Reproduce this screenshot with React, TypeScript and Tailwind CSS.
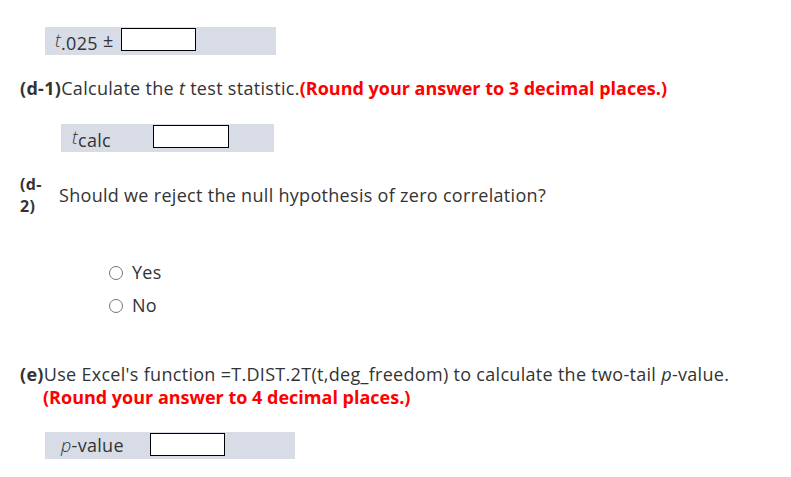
const font = { fontFamily: '"Open Sans", Arial, sans-serif' };

function AnswerBox({ className = '' }: { className?: string }) {
  return <input type="text" className={`h-[23px] w-[75px] border border-black bg-white ${className}`} />;
}

function Radio({ label }: { label: string }) {
  return (
    <label className="flex h-[33px] items-center gap-[9px]">
      <span className="h-[14px] w-[14px] rounded-full border border-[#767676] bg-white" />
      <span>{label}</span>
    </label>
  );
}

export default function App() {
  return (
    <div
      className="min-h-[477px] bg-white pl-[20px] text-[18px] leading-[23px] tracking-[0.3px] text-[#333]"
      style={font}
    >
      <div className="h-[27px]" />

      <div className="ml-[25px] flex h-[28px] w-[231px] items-start bg-[#d8dce6] pl-[10px] pt-px">
        <span className="mt-[1px] flex w-[48px]">
          <i className="font-light">t</i>
          <span className="relative top-[3px]">.025</span>
        </span>
        <span className="mt-[1px] w-[18px] text-[18px]">±</span>
        <AnswerBox />
      </div>

      <p className="mt-[22px] h-[23px] whitespace-nowrap">
        <b className="font-bold">(d-1)</b>Calculate the <i>t</i> test statistic.
        <b className="font-bold tracking-normal text-[#ff0000]">(Round your answer to 3 decimal places.)</b>
      </p>

      <div className="ml-[41px] mt-[24px] flex h-[28px] w-[213px] items-start bg-[#d8dce6] pl-[11px] pt-px">
        <span className="mt-[1px] flex w-[81px]">
          <i className="font-light">t</i>
          <span className="relative top-[3px]">calc</span>
        </span>
        <AnswerBox className="w-[76px]" />
      </div>

      <div className="mt-[21px] flex items-center">
        <div className="w-[39px] text-[16px] font-bold leading-[22px]">
          (d-
          <br />
          2)
        </div>
        <div>Should we reject the null hypothesis of zero correlation?</div>
      </div>

      <div className="ml-[89px] mt-[39px]">
        <Radio label="Yes" />
        <Radio label="No" />
      </div>

      <div className="mt-[41px]">
        <p className="whitespace-nowrap">
          <b className="font-bold">(e)</b>Use Excel's function =T.DIST.2T(t,deg_freedom) to calculate the two-tail{' '}
          <i>p</i>-value.
        </p>
        <p className="ml-[23px] font-bold tracking-normal text-[#ff0000]">(Round your answer to 4 decimal places.)</p>
      </div>

      <div className="ml-[25px] mt-[23px] flex h-[27px] w-[250px] items-start bg-[#d8dce6] pl-[16px] pt-px">
        <span className="mt-[1px] w-[89px]">
          <i className="font-light">p</i>-value
        </span>
        <AnswerBox />
      </div>
    </div>
  );
}
